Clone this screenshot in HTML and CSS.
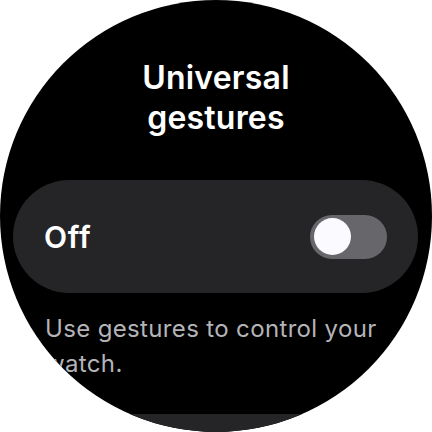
FILE: index.html
```html
<!DOCTYPE html>
<html lang="en">
<head>
<meta charset="utf-8">
<title>Universal gestures</title>
<link rel="stylesheet" href="styles.css">
</head>
<body>
<div class="watch">
  <h1 class="title">Universal<br>gestures</h1>
  <div class="card">
    <span class="card-label">Off</span>
    <span class="switch"><span class="thumb"></span></span>
  </div>
  <p class="desc">Use gestures to control your watch.</p>
  <div class="card card-next"></div>
</div>
</body>
</html>
```

FILE: styles.css
```css
html, body {
  margin: 0;
  padding: 0;
  background: #ffffff;
}
.watch {
  width: 432px;
  height: 432px;
  border-radius: 50%;
  background: #000000;
  overflow: hidden;
  box-sizing: border-box;
  padding-top: 58px;
  display: flex;
  flex-direction: column;
  align-items: stretch;
  font-family: Inter, "Noto Sans", sans-serif;
}
.title {
  margin: 0;
  color: #ffffff;
  font-size: 32px;
  line-height: 40px;
  font-weight: 600;
  text-align: center;
  letter-spacing: 0.2px;
}
.card {
  margin: 42px 14px 0 13px;
  height: 113px;
  flex: none;
  border-radius: 57px;
  background: #252527;
  display: flex;
  align-items: center;
  justify-content: space-between;
  padding: 0 31px 0 31px;
  box-sizing: border-box;
}
.card-label {
  color: #ffffff;
  font-size: 30px;
  font-weight: 600;
  letter-spacing: 0.8px;
}
.switch {
  width: 77px;
  height: 44px;
  border-radius: 22px;
  background: #67666b;
  display: flex;
  align-items: center;
  padding-left: 4px;
  box-sizing: border-box;
}
.thumb {
  width: 37px;
  height: 37px;
  border-radius: 50%;
  background: #fafaff;
}
.desc {
  margin: 18px 30px 0 45px;
  color: #b4b4b8;
  font-size: 24px;
  letter-spacing: 0.35px;
  line-height: 35px;
}
.card-next {
  margin-top: 33px;
}
```
